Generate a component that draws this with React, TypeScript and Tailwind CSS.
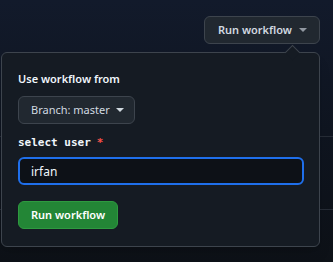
import { useState } from 'react'

function Caret() {
  return (
    <svg width="8" height="4" viewBox="0 0 8 4" className="fill-current">
      <path d="M0 0 L8 0 L4 4 Z" />
    </svg>
  )
}

export default function App() {
  const [user, setUser] = useState('irfan')

  return (
    <div
      className="relative w-[333px] h-[262px] overflow-hidden bg-gradient-to-b from-[#121a2b] via-[#0f1520] to-[#0d1117] text-[#f0f6fc]"
      style={{ fontFamily: '"Noto Sans", "Liberation Sans", sans-serif' }}
    >
      {/* Background rows behind dropdown */}
      <div className="absolute left-0 right-0 top-[136px] border-t border-[#262c36]" />
      <div className="absolute left-0 right-0 top-[209px] border-t border-[#262c36]" />

      {/* Header trigger */}
      <div className="flex justify-end pt-4 pr-[13px]">
        <button className="flex items-center gap-[7px] h-[28px] pl-[13px] pr-[12px] rounded-md border border-[#3d444d] bg-[#212830] text-[11px] font-semibold text-[#d1d9e0]">
          Run workflow
          <span className="text-[#9198a1]"><Caret /></span>
        </button>
      </div>

      {/* Dropdown panel */}
      <div className="absolute left-[1px] top-[52px] w-[319px] rounded-md border border-[#3d444d] bg-[#151b23] shadow-lg">
        {/* pointer */}
        <div className="absolute -top-[6px] right-[21px] w-[11px] h-[11px] rotate-45 border-l border-t border-[#3d444d] bg-[#151b23]" />

        <div className="relative flex flex-col items-start px-4 pt-[17px] pb-[17px]">
          <div className="text-[11px] font-semibold text-[#f0f6fc] leading-[18px]">Use workflow from</div>

          <button className="mt-[8px] flex items-center gap-[6px] h-[28px] pl-[12px] pr-[10px] rounded-md border border-[#3d444d] bg-[#212830] text-[11px] text-[#d1d9e0]">
            Branch: master
            <span className="text-[#d1d9e0]"><Caret /></span>
          </button>

          <div className="mt-[10px] flex items-center gap-[6px] text-[11px] font-bold leading-[18px]" style={{ fontFamily: '"DejaVu Sans Mono", "Liberation Mono", monospace' }}>
            select user
            <span className="text-[#f85149]">*</span>
          </div>

          <input
            value={user}
            onChange={e => setUser(e.target.value)}
            className="mt-[5px] block w-[286px] h-[28px] rounded-md border-2 border-[#1f6feb] bg-[#0d1117] px-[11px] text-[12px] text-[#f0f6fc] outline-none"
          />

          <button className="mt-[16px] flex items-center h-[28px] px-[12px] rounded-md bg-[#238636] border border-[#2e9a40] text-[11px] font-semibold text-white">
            Run workflow
          </button>
        </div>
      </div>
    </div>
  )
}
